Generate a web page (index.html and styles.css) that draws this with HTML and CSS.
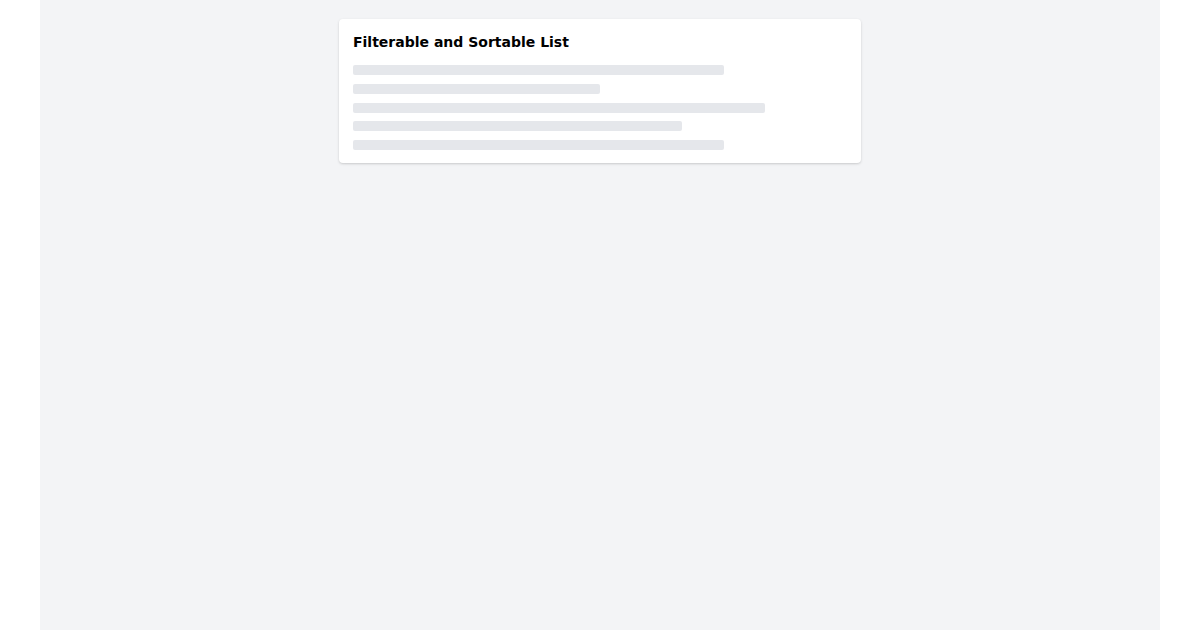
FILE: index.html
```html
<!DOCTYPE html>
<html lang="en">
<head>
  <meta charset="UTF-8" />
  <meta name="viewport" content="width=device-width, initial-scale=1.0" />
  <title>Filterable and Sortable List</title>
  <link rel="stylesheet" href="styles.css">
</head>
<body>
  <div class="page">
    <section class="card">
      <h2>Filterable and Sortable List</h2>
      <div class="skeleton">
        <div class="bar w-3-4"></div>
        <div class="bar w-1-2"></div>
        <div class="bar w-5-6"></div>
        <div class="bar w-2-3"></div>
        <div class="bar w-3-4"></div>
      </div>
    </section>
  </div>
</body>
</html>
```

FILE: styles.css
```css
body {
  font-family: "DejaVu Sans", sans-serif;
  margin: 0;
  background-color: #ffffff;
  color: #000;
}

.page {
  max-width: 1120px;
  margin: 0 auto;
  min-height: 100vh;
  background-color: #f3f4f6;
  padding-top: 19px;
  box-sizing: border-box;
}

.card {
  width: 522px;
  margin: 0 auto;
  background-color: white;
  border-radius: 4px;
  box-shadow: 0 1px 3px rgba(0, 0, 0, 0.12), 0 1px 2px rgba(0, 0, 0, 0.06);
  padding: 14px 14px 13px;
  box-sizing: border-box;
}

.card h2 {
  font-size: 14px;
  font-weight: bold;
  line-height: 18px;
  margin: 0 0 14px;
}

.skeleton {
  display: flex;
  flex-direction: column;
  gap: 8.75px;
}

.bar {
  height: 10px;
  background-color: #e5e7eb;
  border-radius: 2px;
}

.w-3-4 { width: 75%; }
.w-1-2 { width: 50%; }
.w-5-6 { width: 83.4%; }
.w-2-3 { width: 66.6%; }
```
